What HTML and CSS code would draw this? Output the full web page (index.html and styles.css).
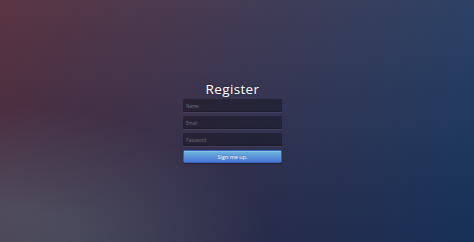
FILE: index.html
```html
<!DOCTYPE html>
<html>
<head>
<meta charset="utf-8">
<link rel="stylesheet" href="styles.css">
</head>
<body>
<div class="page">
  <form class="login">
    <h1 class="title">Register</h1>
    <input class="field" type="text" placeholder="Name">
    <input class="field" type="text" placeholder="Email">
    <input class="field" type="password" placeholder="Password">
    <button class="btn" type="button">Sign me up.</button>
  </form>
</div>
</body>
</html>
```
FILE: styles.css
```css
html, body {
  margin: 0;
  padding: 0;
  width: 100%;
  height: 100%;
}
body {
  font-family: "Open Sans", "DejaVu Sans", sans-serif;
  background: #092756;
  background:
    radial-gradient(ellipse at 0% 100%, rgba(104,128,138,.4) 10%, rgba(138,114,76,0) 40%),
    linear-gradient(to bottom, rgba(57,173,219,.25) 0%, rgba(42,60,87,.4) 100%),
    linear-gradient(135deg, #670d10 0%, #092756 100%);
}
.page {
  height: 100%;
  display: flex;
  justify-content: center;
  padding-right: 9px;
  box-sizing: border-box;
}
.login {
  width: 99px;
  margin-top: 82px;
  display: flex;
  flex-direction: column;
  gap: 4px;
}
.title {
  margin: 0 0 -1px 0;
  color: #fff;
  font-size: 13.5px;
  font-weight: 400;
  letter-spacing: 0.35px;
  line-height: 14px;
  text-align: center;
  text-shadow: 0 0 3px rgba(0,0,0,0.3);
}
.field {
  box-sizing: border-box;
  width: 100%;
  height: 13px;
  margin: 0;
  padding: 0 3px;
  background: rgba(0,0,0,0.3);
  border: none;
  outline: none;
  border-radius: 1px;
  box-shadow: inset 0 -1px 1px rgba(0,0,0,0.2), 0 1px 0 rgba(255,255,255,0.08);
  font-family: "Open Sans", sans-serif;
  font-size: 4.5px;
  color: #fff;
}
.field::placeholder {
  color: rgba(255,255,255,0.35);
}
.btn {
  box-sizing: border-box;
  width: 100%;
  height: 13px;
  margin: 0;
  padding: 0;
  border: 1px solid #3762bc;
  border-radius: 1.5px;
  background: linear-gradient(to bottom, #6eb6de, #4a77d4);
  box-shadow: inset 0 1px 0 rgba(255,255,255,0.2), 0 1px 1px rgba(0,0,0,0.3);
  color: #fff;
  font-family: "Open Sans", sans-serif;
  font-size: 5.5px;
  text-shadow: 0 -1px 0 rgba(0,0,0,0.25);
}
```
